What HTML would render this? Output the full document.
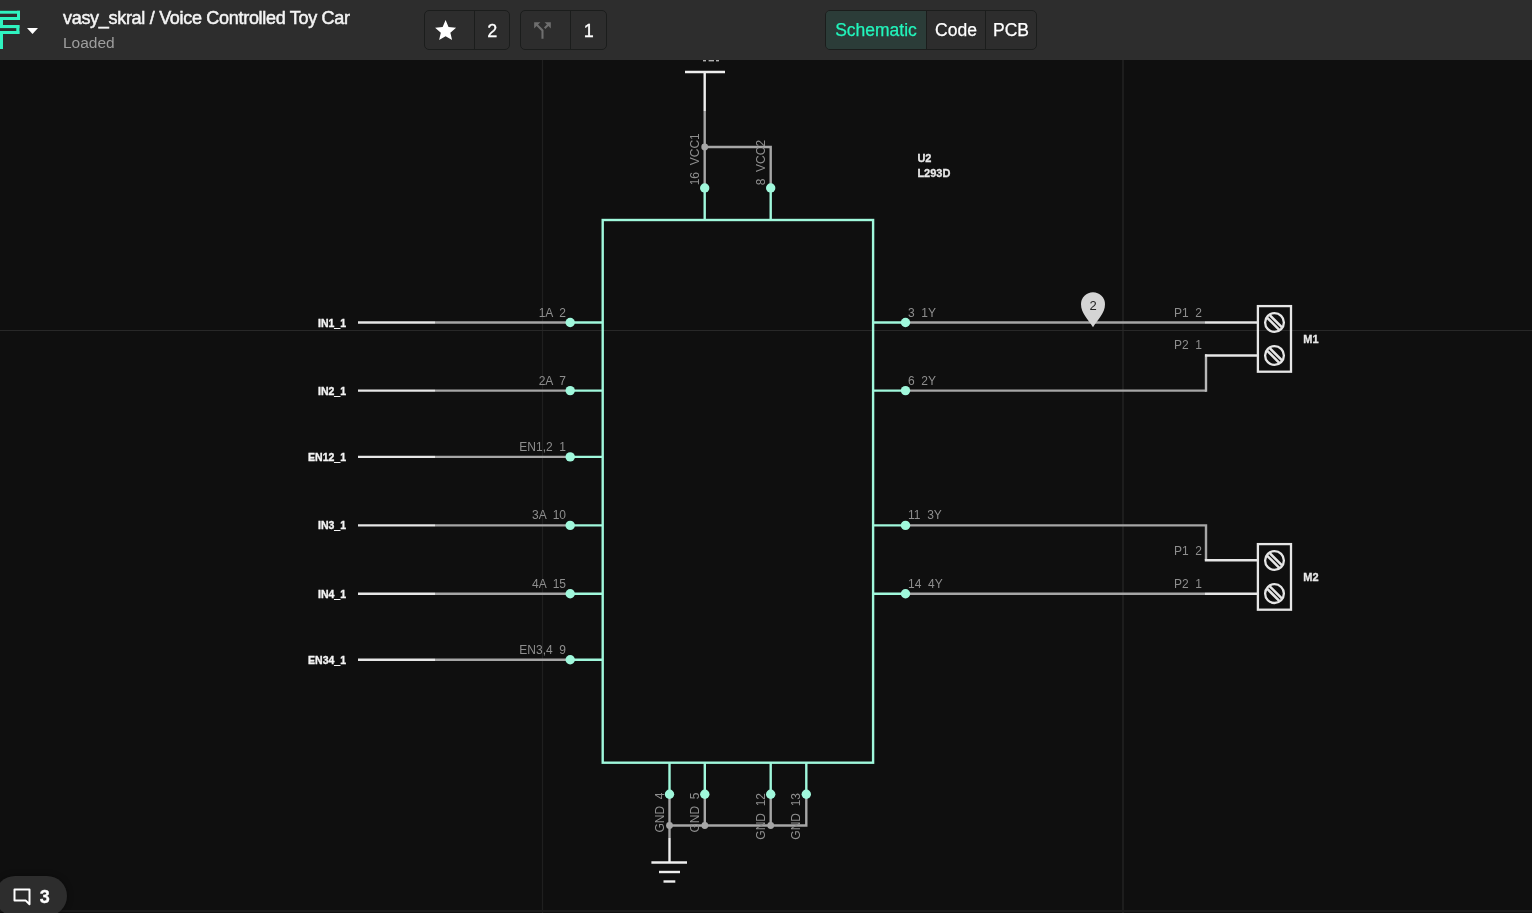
<!DOCTYPE html>
<html><head><meta charset="utf-8">
<style>
html,body{margin:0;padding:0;width:1532px;height:913px;overflow:hidden;background:#0f0f0f;font-family:"Liberation Sans",sans-serif;}
#hdr{position:absolute;left:0;top:0;width:1532px;height:60px;background:#2d2d2d;z-index:5;will-change:transform;}
.t{position:absolute;white-space:pre;}
.grp{position:absolute;top:10px;height:40px;border:1px solid #1b1d1c;border-radius:5px;box-sizing:border-box;overflow:hidden;display:flex;}
.grp>div{height:100%;box-sizing:border-box;display:flex;align-items:center;justify-content:center;color:#fff;}
#pill{position:absolute;left:-5px;top:876px;width:72px;height:40px;border-radius:20px;background:#2d2d2d;z-index:5;box-shadow:0 0 6px rgba(0,0,0,0.35);}
svg{position:absolute;left:0;top:0;}
#cv{will-change:transform;}
</style></head><body>
<svg id="cv" width="1532" height="913" viewBox="0 0 1532 913" font-family="Liberation Sans, sans-serif">
  <!-- grid -->
  <line x1="542.5" y1="60" x2="542.5" y2="913" stroke="#1f1f1f" stroke-width="1.2"/>
  <line x1="1123" y1="60" x2="1123" y2="913" stroke="#1d1d1d" stroke-width="2"/>
  <line x1="0" y1="330.5" x2="1532" y2="330.5" stroke="#282828" stroke-width="1"/>
  <line x1="0" y1="911" x2="1532" y2="911" stroke="#1c1c1c" stroke-width="2"/>

  <!-- left wires -->
  <g stroke-width="2.4" fill="none">
    <g stroke="#a6a6a6">
      <line x1="435" y1="322.5" x2="570" y2="322.5"/>
      <line x1="435" y1="390.6" x2="570" y2="390.6"/>
      <line x1="435" y1="456.9" x2="570" y2="456.9"/>
      <line x1="435" y1="525.4" x2="570" y2="525.4"/>
      <line x1="435" y1="593.7" x2="570" y2="593.7"/>
      <line x1="435" y1="659.8" x2="570" y2="659.8"/>
    </g>
    <g stroke="#e6e6e6">
      <line x1="358" y1="322.5" x2="435" y2="322.5"/>
      <line x1="358" y1="390.6" x2="435" y2="390.6"/>
      <line x1="358" y1="456.9" x2="435" y2="456.9"/>
      <line x1="358" y1="525.4" x2="435" y2="525.4"/>
      <line x1="358" y1="593.7" x2="435" y2="593.7"/>
      <line x1="358" y1="659.8" x2="435" y2="659.8"/>
    </g>
  </g>

  <!-- right wires -->
  <g stroke-width="2.4" fill="none" stroke="#a6a6a6">
    <polyline points="905,322.5 1205,322.5"/>
    <polyline points="905,390.6 1206,390.6"/>
    <polyline points="1206,390.6 1206,355.5" stroke="#b8b8b8" stroke-linecap="square"/>
    <polyline points="905,525.4 1206,525.4 1206,560.3"/>
    <polyline points="905,593.7 1205,593.7"/>
  </g>
  <g stroke-width="2.4" fill="none" stroke="#e6e6e6">
    <polyline points="1205,322.5 1257,322.5"/>
    <polyline points="1205,355.5 1257,355.5"/>
    <polyline points="1206,560.3 1257,560.3" stroke-linecap="square"/>
    <polyline points="1205,593.7 1257,593.7"/>
  </g>

  <!-- VCC -->
  <g fill="none" stroke-width="2.4">
    <line x1="685" y1="72" x2="725" y2="72" stroke="#eeeeee"/>
    <line x1="704.7" y1="72" x2="704.7" y2="111" stroke="#eeeeee"/>
    <polyline points="704.7,111 704.7,188" stroke="#a6a6a6"/>
    <polyline points="704.7,147 770.7,147 770.7,188" stroke="#a6a6a6"/>
  </g>
  <circle cx="704.7" cy="147" r="3.4" fill="#a6a6a6"/>
  <g fill="#b0b0b0"><rect x="703" y="60" width="3" height="1.4"/><rect x="708.6" y="60" width="5.4" height="1.4"/><rect x="716" y="60" width="3" height="1.4"/></g>

  <!-- GND -->
  <g fill="none" stroke-width="2.4">
    <polyline points="669.5,794 669.5,838" stroke="#a6a6a6"/>
    <polyline points="704.8,794 704.8,825.5" stroke="#a6a6a6"/>
    <polyline points="770.7,794 770.7,825.5" stroke="#a6a6a6"/>
    <polyline points="669.5,825.5 806.3,825.5 806.3,794" stroke="#a6a6a6"/>
    <line x1="669.5" y1="838" x2="669.5" y2="862.5" stroke="#eeeeee"/>
    <line x1="651.4" y1="862.5" x2="687" y2="862.5" stroke="#eeeeee"/>
    <line x1="659" y1="872" x2="680" y2="872" stroke="#eeeeee"/>
    <line x1="663.5" y1="881.5" x2="675.3" y2="881.5" stroke="#eeeeee"/>
  </g>
  <g fill="#a6a6a6">
    <circle cx="669.5" cy="825.5" r="3.4"/>
    <circle cx="704.8" cy="825.5" r="3.4"/>
    <circle cx="770.7" cy="825.5" r="3.4"/>
  </g>

  <!-- chip body & pins -->
  <g stroke="#a0f8dc" stroke-width="2.4" fill="none">
    <rect x="602.7" y="220" width="270.4" height="542.7"/>
    <line x1="570" y1="322.5" x2="602.7" y2="322.5"/>
    <line x1="570" y1="390.6" x2="602.7" y2="390.6"/>
    <line x1="570" y1="456.9" x2="602.7" y2="456.9"/>
    <line x1="570" y1="525.4" x2="602.7" y2="525.4"/>
    <line x1="570" y1="593.7" x2="602.7" y2="593.7"/>
    <line x1="570" y1="659.8" x2="602.7" y2="659.8"/>
    <line x1="873.1" y1="322.5" x2="905.5" y2="322.5"/>
    <line x1="873.1" y1="390.6" x2="905.5" y2="390.6"/>
    <line x1="873.1" y1="525.4" x2="905.5" y2="525.4"/>
    <line x1="873.1" y1="593.7" x2="905.5" y2="593.7"/>
    <line x1="704.7" y1="188" x2="704.7" y2="220"/>
    <line x1="770.7" y1="188" x2="770.7" y2="220"/>
    <line x1="669.5" y1="762.7" x2="669.5" y2="794"/>
    <line x1="704.8" y1="762.7" x2="704.8" y2="794"/>
    <line x1="770.7" y1="762.7" x2="770.7" y2="794"/>
    <line x1="806.3" y1="762.7" x2="806.3" y2="794"/>
  </g>
  <g fill="#a0f8dc">
    <circle cx="570.2" cy="322.5" r="4.7"/>
    <circle cx="570.2" cy="390.6" r="4.7"/>
    <circle cx="570.2" cy="456.9" r="4.7"/>
    <circle cx="570.2" cy="525.4" r="4.7"/>
    <circle cx="570.2" cy="593.7" r="4.7"/>
    <circle cx="570.2" cy="659.8" r="4.7"/>
    <circle cx="905.5" cy="322.5" r="4.7"/>
    <circle cx="905.5" cy="390.6" r="4.7"/>
    <circle cx="905.5" cy="525.4" r="4.7"/>
    <circle cx="905.5" cy="593.7" r="4.7"/>
    <circle cx="704.7" cy="188" r="4.7"/>
    <circle cx="770.7" cy="188" r="4.7"/>
    <circle cx="669.5" cy="794.2" r="4.7"/>
    <circle cx="704.8" cy="794.2" r="4.7"/>
    <circle cx="770.7" cy="794.2" r="4.7"/>
    <circle cx="806.3" cy="794.2" r="4.7"/>
  </g>

  <!-- pin labels -->
  <g fill="#8e8e8e" font-size="12" style="white-space:pre">
    <text x="566" y="316.5" text-anchor="end">1A &#160;2</text>
    <text x="566" y="384.6" text-anchor="end">2A &#160;7</text>
    <text x="566" y="450.9" text-anchor="end">EN1,2 &#160;1</text>
    <text x="566" y="519.4" text-anchor="end">3A &#160;10</text>
    <text x="566" y="587.7" text-anchor="end">4A &#160;15</text>
    <text x="566" y="653.8" text-anchor="end">EN3,4 &#160;9</text>
    <text x="908" y="316.5">3 &#160;1Y</text>
    <text x="908" y="384.6">6 &#160;2Y</text>
    <text x="908" y="519.4">11 &#160;3Y</text>
    <text x="908" y="587.7">14 &#160;4Y</text>
    <text x="1202" y="316.8" text-anchor="end">P1 &#160;2</text>
    <text x="1202" y="349.3" text-anchor="end">P2 &#160;1</text>
    <text x="1202" y="554.6" text-anchor="end">P1 &#160;2</text>
    <text x="1202" y="587.6" text-anchor="end">P2 &#160;1</text>
    <text transform="translate(699.2,185.3) rotate(-90)">16 &#160;VCC1</text>
    <text transform="translate(765.2,185.3) rotate(-90)">8 &#160;VCC2</text>
    <text transform="translate(663.5,832.6) rotate(-90)">GND &#160;4</text>
    <text transform="translate(699.2,832.6) rotate(-90)">GND &#160;5</text>
    <text transform="translate(765.3,839.7) rotate(-90)">GND &#160;12</text>
    <text transform="translate(800.2,839.7) rotate(-90)">GND &#160;13</text>
  </g>

  <!-- net labels -->
  <g fill="#f4f4f4" stroke="#f4f4f4" stroke-width="0.35" font-size="10.5" font-weight="bold" text-anchor="end">
    <text x="346" y="326.5">IN1_1</text>
    <text x="346" y="394.6">IN2_1</text>
    <text x="346" y="460.9">EN12_1</text>
    <text x="346" y="529.4">IN3_1</text>
    <text x="346" y="597.7">IN4_1</text>
    <text x="346" y="663.8">EN34_1</text>
  </g>
  <g fill="#e8e8e8" stroke="#e8e8e8" stroke-width="0.3" font-size="11" font-weight="bold">
    <text x="917.4" y="162.2">U2</text>
    <text x="917.4" y="177.2">L293D</text>
    <text x="1303.3" y="343.1">M1</text>
    <text x="1303.3" y="581.4">M2</text>
  </g>

  <!-- terminals -->
  <g stroke="#e6e6e6" stroke-width="2.3" fill="none">
    <rect x="1257.9" y="306.1" width="33.1" height="65.6"/>
    <rect x="1257.9" y="544.1" width="33.1" height="65.6"/>
  </g>
  
  <g transform="translate(1274.5,322.5)" stroke="#e6e6e6" fill="none"><circle cx="0" cy="0" r="9.4" stroke-width="2.3"/><path d="M-4.74,-7.28 L7.28,4.74 M-7.28,-4.74 L4.74,7.28" stroke-width="2.5"/></g>
  <g transform="translate(1274.5,355.5)" stroke="#e6e6e6" fill="none"><circle cx="0" cy="0" r="9.4" stroke-width="2.3"/><path d="M-4.74,-7.28 L7.28,4.74 M-7.28,-4.74 L4.74,7.28" stroke-width="2.5"/></g>
  <g transform="translate(1274.5,560.5)" stroke="#e6e6e6" fill="none"><circle cx="0" cy="0" r="9.4" stroke-width="2.3"/><path d="M-4.74,-7.28 L7.28,4.74 M-7.28,-4.74 L4.74,7.28" stroke-width="2.5"/></g>
  <g transform="translate(1274.5,593.6)" stroke="#e6e6e6" fill="none"><circle cx="0" cy="0" r="9.4" stroke-width="2.3"/><path d="M-4.74,-7.28 L7.28,4.74 M-7.28,-4.74 L4.74,7.28" stroke-width="2.5"/></g>

  <!-- comment marker -->
  <path d="M1093,327.2 C1088,319 1081,313 1081,304.2 A12,12 0 0 1 1105,304.2 C1105,313 1098,319 1093,327.2 Z" fill="#d4d4d4"/>
  <text x="1093" y="310" font-size="13" fill="#222" text-anchor="middle">2</text>
</svg>

<div id="hdr">
  <!-- logo -->
  <svg width="60" height="60" style="position:absolute;left:0;top:0">
    <g fill="#2ff3c0">
      <rect x="0" y="10.8" width="20" height="2.9"/>
      <rect x="17" y="10.8" width="3" height="9.2"/>
      <rect x="0" y="17" width="20" height="3"/>
      <rect x="0" y="20" width="3" height="5"/>
      <rect x="0" y="34" width="3" height="15"/>
      <rect x="0" y="25" width="19.4" height="3.1"/>
      <rect x="16.3" y="25" width="3.1" height="9"/>
      <rect x="0" y="31" width="19.4" height="3"/>
    </g>
    <path d="M27,28 L38,28 L32.5,34 Z" fill="#ffffff"/>
  </svg>
  <div class="t" style="left:63px;top:8.4px;font-size:18px;color:#f4f4f4;letter-spacing:-0.3px;-webkit-text-stroke:0.5px #f4f4f4">vasy_skral / Voice Controlled Toy Car</div>
  <div class="t" style="left:63px;top:34px;font-size:15.5px;letter-spacing:0;color:#9e9e9e">Loaded</div>

  <div class="grp" style="left:424px;width:86px">
    <div style="width:51px;border-right:1px solid #1b1d1c"></div>
    <div style="width:34px;font-size:18px;padding-top:2px;-webkit-text-stroke:0.3px #fff">2</div>
    <svg width="24" height="24" viewBox="0 0 24 24" style="position:absolute;left:7.8px;top:7px;transform-origin:0 0;transform:scale(1.05)"><path fill="#fff" d="M12 17.27L18.18 21l-1.64-7.03L22 9.24l-7.19-.61L12 2 9.19 8.63 2 9.24l5.46 4.73L5.82 21z"/></svg>
  </div>
  <div class="grp" style="left:520px;width:87px">
    <div style="width:51px;border-right:1px solid #1b1d1c"></div>
    <div style="width:35px;font-size:18px;padding-top:2px;-webkit-text-stroke:0.3px #fff">1</div>
    <svg width="24" height="24" viewBox="0 0 24 24" style="position:absolute;left:9.05px;top:6.87px;transform-origin:0 0;transform:scale(1.04)"><path fill="#6e6e6e" d="M14 4l2.29 2.29-2.88 2.88 1.42 1.42 2.88-2.88L20 10V4zm-4 0H4v6l2.29-2.29 4.71 4.7V20h2v-8.41l-5.29-5.3z"/></svg>
  </div>
  <div class="grp" style="left:825px;width:212px">
    <div style="width:101px;border-right:1px solid #1b1d1c;background:#2b3c38;color:#22f5bc;font-size:17.5px;-webkit-text-stroke:0.25px #22f5bc">Schematic</div>
    <div style="width:59px;border-right:1px solid #1b1d1c;font-size:17.5px;-webkit-text-stroke:0.25px #fff">Code</div>
    <div style="width:50px;font-size:17.5px;-webkit-text-stroke:0.25px #fff">PCB</div>
  </div>
</div>
<div id="pill"></div>
<svg width="70" height="40" style="position:absolute;left:0;top:873px;z-index:6;will-change:transform" viewBox="0 873 70 40">
  <path d="M14.5,889.6 H29.5 V904.3 L25.8,900.6 H14.5 Z" fill="none" stroke="#fff" stroke-width="2" stroke-linejoin="round"/>
  <text x="39.8" y="903.1" font-family="Liberation Sans, sans-serif" font-weight="bold" font-size="18" fill="#fff" stroke="#fff" stroke-width="0.3">3</text>
</svg>
</body></html>
